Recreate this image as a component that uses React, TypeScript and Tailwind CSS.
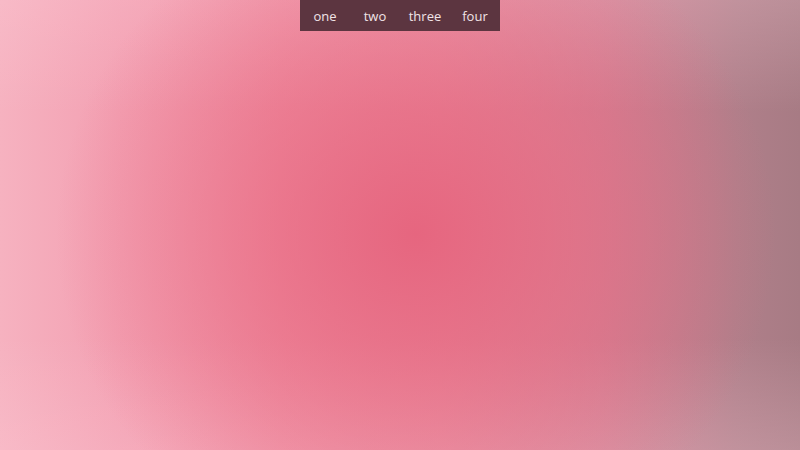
const items = ["one", "two", "three", "four"];

export default function App() {
  return (
    <div className="relative h-[450px] w-[800px] overflow-hidden bg-[radial-gradient(ellipse_45%_75%_at_52%_52%,rgba(230,98,124,0.9)_0%,rgba(233,104,128,0.55)_45%,rgba(236,120,140,0)_100%),linear-gradient(to_bottom,rgba(255,214,224,0.22)_0%,rgba(255,214,224,0)_25%,rgba(255,214,224,0)_75%,rgba(255,214,224,0.22)_100%),linear-gradient(to_right,#f6b2c0_0%,#f3a0b2_15%,#ee8ea2_35%,#e5889c_55%,#d08093_75%,#b07f8a_92%,#a77b84_100%)] font-['Open_Sans','Noto_Sans',sans-serif]">
      <nav className="mx-auto flex h-[31px] w-[200px] bg-[#5c3540]">
        {items.map((item) => (
          <a
            key={item}
            href="#"
            className="flex w-[50px] items-center justify-center pt-[3px] text-[13px] text-[#f1e4e7]"
          >
            {item}
          </a>
        ))}
      </nav>
    </div>
  );
}
